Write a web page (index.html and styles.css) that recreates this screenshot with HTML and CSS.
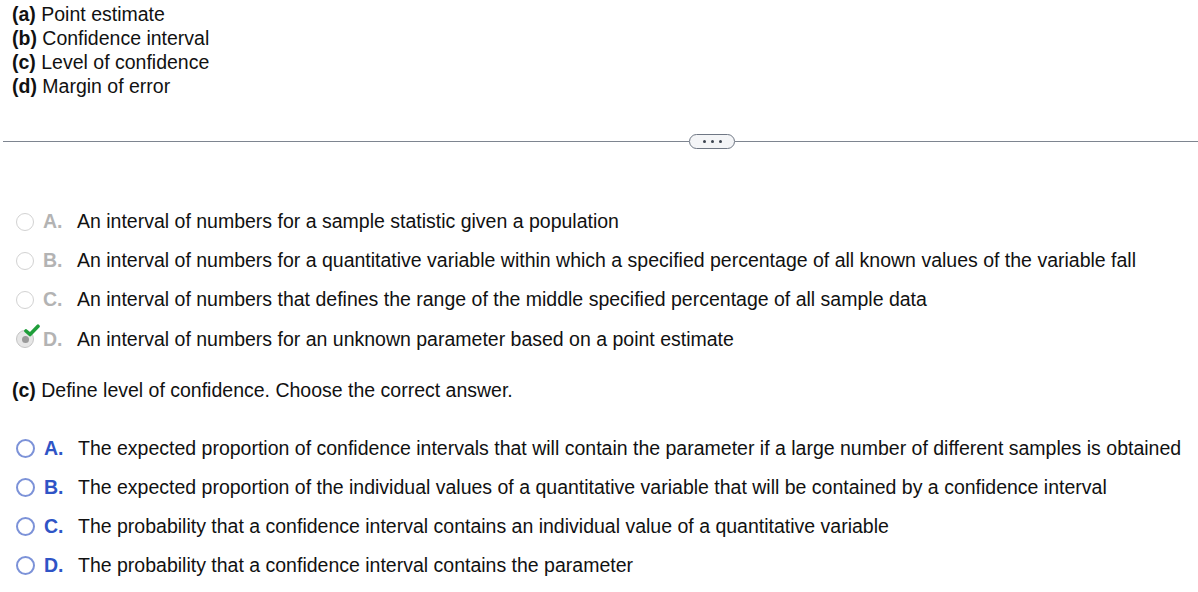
FILE: index.html
```html
<!DOCTYPE html>
<html>
<head>
<meta charset="utf-8">
<link rel="stylesheet" href="styles.css">
</head>
<body>
<div class="page">
  <div class="terms">
    <div class="term"><b>(a)</b> Point estimate</div>
    <div class="term"><b>(b)</b> Confidence interval</div>
    <div class="term"><b>(c)</b> Level of confidence</div>
    <div class="term"><b>(d)</b> Margin of error</div>
  </div>

  <div class="sep">
    <div class="sep-line left"></div>
    <div class="pill"><span></span><span></span><span></span></div>
    <div class="sep-line"></div>
  </div>

  <div class="options done">
    <div class="opt"><span class="radio"></span><span class="letter">A.</span><span class="txt">An interval of numbers for a sample statistic given a population</span></div>
    <div class="opt"><span class="radio"></span><span class="letter">B.</span><span class="txt">An interval of numbers for a quantitative variable within which a specified percentage of all known values of the variable fall</span></div>
    <div class="opt"><span class="radio"></span><span class="letter">C.</span><span class="txt">An interval of numbers that defines the range of the middle specified percentage of all sample data</span></div>
    <div class="opt"><span class="radio checked"><svg class="check" viewBox="0 0 16 13" width="16" height="13"><path d="M2 7 L6 10.5 L14 2.2" fill="none" stroke="#1f9e3a" stroke-width="3.6" stroke-linecap="round" stroke-linejoin="round"/></svg></span><span class="letter">D.</span><span class="txt">An interval of numbers for an unknown parameter based on a point estimate</span></div>
  </div>

  <div class="question"><b>(c)</b> Define level of confidence. Choose the correct answer.</div>

  <div class="options active">
    <div class="opt"><span class="radio"></span><span class="letter">A.</span><span class="txt">The expected proportion of confidence intervals that will contain the parameter if a large number of different samples is obtained</span></div>
    <div class="opt"><span class="radio"></span><span class="letter">B.</span><span class="txt">The expected proportion of the individual values of a quantitative variable that will be contained by a confidence interval</span></div>
    <div class="opt"><span class="radio"></span><span class="letter">C.</span><span class="txt">The probability that a confidence interval contains an individual value of a quantitative variable</span></div>
    <div class="opt"><span class="radio"></span><span class="letter">D.</span><span class="txt">The probability that a confidence interval contains the parameter</span></div>
  </div>
</div>
</body>
</html>
```

FILE: styles.css
```css
html, body {
  margin: 0;
  padding: 0;
  background: #ffffff;
}
body {
  font-family: "Liberation Sans", Arial, sans-serif;
  font-size: 19.5px;
  color: #111111;
  width: 1198px;
  overflow: hidden;
}
.page {
  padding-top: 2px;
}
.terms {
  padding-left: 12px;
}
.term {
  line-height: 24px;
  height: 24px;
}
.term b, .question b {
  font-weight: bold;
}
.sep {
  display: flex;
  align-items: center;
  height: 16px;
  margin-top: 35px;
  padding-left: 3px;
}
.sep-line {
  flex: 1;
  height: 1px;
  background: #7e8590;
}
.sep-line.left {
  flex: none;
  width: 686px;
}
.pill {
  width: 44px;
  height: 13px;
  border: 1.5px solid #6f7784;
  border-radius: 8px;
  background: #f4f5f7;
  display: flex;
  align-items: center;
  justify-content: center;
  gap: 5px;
  box-sizing: content-box;
}
.pill span {
  width: 3px;
  height: 3px;
  border-radius: 50%;
  background: #3d4550;
}
.options {
  display: flex;
  flex-direction: column;
}
.options.done {
  margin-top: 53px;
}
.opt {
  display: flex;
  align-items: center;
  height: 39.2px;
}
.radio {
  position: relative;
  width: 16px;
  height: 16px;
  border-radius: 50%;
  margin-left: 16px;
  margin-right: 9px;
  box-sizing: content-box;
  flex: none;
}
.letter {
  width: 34px;
  font-weight: bold;
  flex: none;
}
.txt {
  white-space: nowrap;
}
.done .radio {
  border: 1.5px solid #d2d2d2;
}
.done .letter {
  color: #b3b3b3;
}
.done .radio.checked {
  border-color: #c4c4c4;
  background: #e6e6e6;
}
.done .radio.checked::after {
  content: "";
  position: absolute;
  left: 4.5px;
  top: 4.5px;
  width: 7px;
  height: 7px;
  border-radius: 50%;
  background: #9a9a9a;
}
.check {
  position: absolute;
  left: 7px;
  top: -7px;
  z-index: 2;
}
.question {
  padding-left: 12px;
  line-height: 24px;
  margin-top: 19px;
}
.options.active {
  margin-top: 27px;
}
.active .radio {
  border: 2px solid #7c92d8;
  width: 15px;
  height: 15px;
}
.active .letter {
  color: #2f54c6;
}
```
